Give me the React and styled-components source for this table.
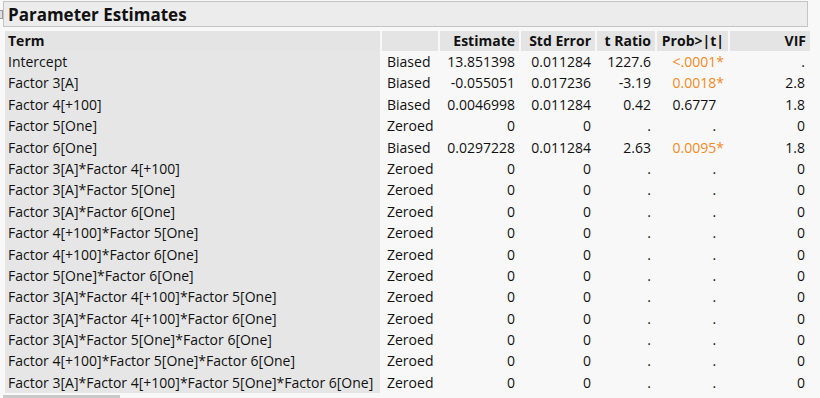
import React from 'react';
import styled, { createGlobalStyle } from 'styled-components';

const GlobalStyle = createGlobalStyle`
  html, body {
    margin: 0;
    padding: 0;
    background: #f8f8f8;
  }
  body {
    font-family: "Open Sans", "Noto Sans", sans-serif;
    color: #111;
  }
`;

const COLS = '375px 56px 79px 74px 58px 71px 80px';

const Page = styled.div`
  width: 820px;
  height: 398px;
  overflow: hidden;
  padding-top: 1px;
  box-sizing: border-box;
`;

const TitleRow = styled.div`
  display: flex;
  align-items: center;
  margin-left: -6px;
`;

const Toggle = styled.svg`
  width: 9px;
  height: 9px;
  flex: none;
`;

const TitleBox = styled.div`
  width: 805px;
  height: 26px;
  box-sizing: border-box;
  border: 1px solid #c4c4c4;
  background: #ececec;
  display: flex;
  align-items: center;
  padding-left: 4px;
  font-weight: 700;
  font-size: 17px;
  color: #111;
`;

const Table = styled.div`
  margin: 4px 0 0 5px;
`;

const Row = styled.div`
  display: grid;
  grid-template-columns: ${COLS};
  column-gap: 2px;
  height: ${p => (p.$head ? '20px' : '21.4px')};
  align-items: stretch;
`;

const HeadCell = styled.div`
  background: #e4e4e4;
  font-weight: 700;
  font-size: 14px;
  line-height: 20px;
  text-align: ${p => (p.$left ? 'left' : 'right')};
  padding: ${p => (p.$left ? '0 0 0 3px' : '0 4px 0 0')};
  white-space: nowrap;
`;

const TermCell = styled.div`
  background: #e6e6e6;
  font-size: 14px;
  line-height: 21.4px;
  padding-left: 3px;
  white-space: nowrap;
  overflow: hidden;
`;

const Cell = styled.div`
  font-size: 14px;
  line-height: 21.4px;
  white-space: nowrap;
  text-align: ${p => (p.$left ? 'left' : 'right')};
  padding: ${p => (p.$left ? '0 0 0 5px' : `0 ${p.$pr || 4}px 0 0`)};
  color: ${p => (p.$sig ? '#f08a24' : '#111')};
`;

const Star = styled.span`
  visibility: ${p => (p.$show ? 'visible' : 'hidden')};
`;

const Scroll = styled.div`
  margin: 2px 0 0 3px;
  width: 117px;
  height: 3px;
  background: #c9c9c9;
`;

const rows = [
  ['Intercept', 'Biased', '13.851398', '0.011284', '1227.6', '<.0001', '.', true],
  ['Factor 3[A]', 'Biased', '-0.055051', '0.017236', '-3.19', '0.0018', '2.8', true],
  ['Factor 4[+100]', 'Biased', '0.0046998', '0.011284', '0.42', '0.6777', '1.8', false],
  ['Factor 5[One]', 'Zeroed', '0', '0', '.', '.', '0', false],
  ['Factor 6[One]', 'Biased', '0.0297228', '0.011284', '2.63', '0.0095', '1.8', true],
  ['Factor 3[A]*Factor 4[+100]', 'Zeroed', '0', '0', '.', '.', '0', false],
  ['Factor 3[A]*Factor 5[One]', 'Zeroed', '0', '0', '.', '.', '0', false],
  ['Factor 3[A]*Factor 6[One]', 'Zeroed', '0', '0', '.', '.', '0', false],
  ['Factor 4[+100]*Factor 5[One]', 'Zeroed', '0', '0', '.', '.', '0', false],
  ['Factor 4[+100]*Factor 6[One]', 'Zeroed', '0', '0', '.', '.', '0', false],
  ['Factor 5[One]*Factor 6[One]', 'Zeroed', '0', '0', '.', '.', '0', false],
  ['Factor 3[A]*Factor 4[+100]*Factor 5[One]', 'Zeroed', '0', '0', '.', '.', '0', false],
  ['Factor 3[A]*Factor 4[+100]*Factor 6[One]', 'Zeroed', '0', '0', '.', '.', '0', false],
  ['Factor 3[A]*Factor 5[One]*Factor 6[One]', 'Zeroed', '0', '0', '.', '.', '0', false],
  ['Factor 4[+100]*Factor 5[One]*Factor 6[One]', 'Zeroed', '0', '0', '.', '.', '0', false],
  ['Factor 3[A]*Factor 4[+100]*Factor 5[One]*Factor 6[One]', 'Zeroed', '0', '0', '.', '.', '0', false],
];

export default function App() {
  return (
    <Page>
      <GlobalStyle />
      <TitleRow>
        <Toggle viewBox="0 0 9 9">
          <rect x="0.5" y="0.5" width="8" height="8" fill="#e0e0e0" stroke="#9a9a9a" />
        </Toggle>
        <TitleBox>Parameter Estimates</TitleBox>
      </TitleRow>
      <Table>
        <Row $head>
          <HeadCell $left>Term</HeadCell>
          <HeadCell />
          <HeadCell>Estimate</HeadCell>
          <HeadCell>Std Error</HeadCell>
          <HeadCell>t Ratio</HeadCell>
          <HeadCell>Prob&gt;|t|</HeadCell>
          <HeadCell>VIF</HeadCell>
        </Row>
        {rows.map(([term, kind, est, se, t, p, vif, sig]) => (
          <Row key={term}>
            <TermCell>{term}</TermCell>
            <Cell $left>{kind}</Cell>
            <Cell>{est}</Cell>
            <Cell>{se}</Cell>
            <Cell>{t}</Cell>
            <Cell $sig={sig}>
              {p}
              <Star $show={sig}>*</Star>
            </Cell>
            <Cell $pr={5}>{vif}</Cell>
          </Row>
        ))}
      </Table>
      <Scroll />
    </Page>
  );
}
